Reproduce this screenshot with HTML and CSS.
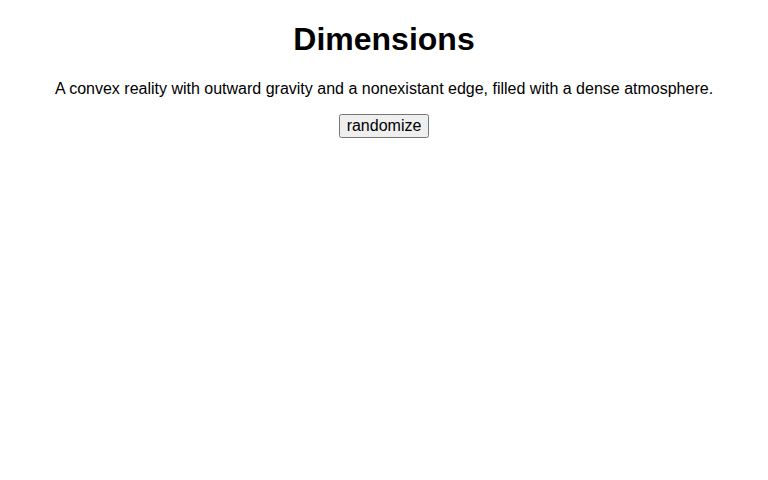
FILE: index.html
```html
<!DOCTYPE html>
<html>
<head>
<meta charset="utf-8">
<title>Dimensions</title>
<link rel="stylesheet" href="styles.css">
</head>
<body>
<main class="page">
<h1 class="title">Dimensions</h1>
<p class="desc">A convex reality with outward gravity and a nonexistant edge, filled with a dense atmosphere.</p>
<div class="actions"><button class="btn">randomize</button></div>
</main>
</body>
</html>
```
FILE: styles.css
```css
body {
  margin: 0 8px 8px;
  font-family: "Liberation Sans", Arial, sans-serif;
  background: #fff;
  color: #000;
}
.page {
  text-align: center;
}
.title {
  font-size: 32px;
  font-weight: bold;
  margin: 21.44px 0;
}
.desc {
  font-size: 16px;
  margin: 16px 0;
}
.btn {
  font-family: "Liberation Sans", Arial, sans-serif;
  font-size: 16px;
}
```
